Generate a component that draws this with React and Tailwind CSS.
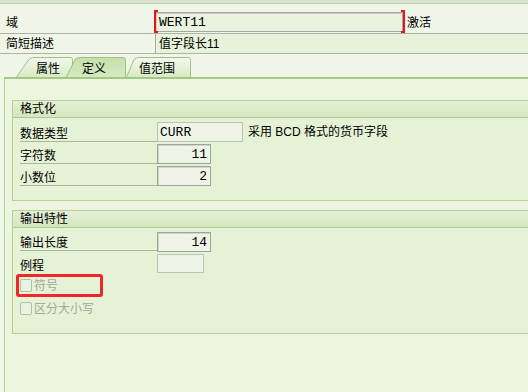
import React from "react";

const CJK = "font-['Liberation_Sans','Noto_Sans_CJK_SC',sans-serif]";
const MONO = "font-['Liberation_Mono','Noto_Sans_CJK_SC',monospace]";

function Tab({ w, s, tp, label, active, className }) {
  const id = active ? "gActive" : "gIdle";
  return (
    <div className={"relative h-[20px] shrink-0 " + className} style={{ width: w }}>
      <svg className="absolute inset-0" width={w} height={20} viewBox={`0 0 ${w} 20`}>
        <defs>
          <linearGradient id="gIdle" x1="0" y1="0" x2="0" y2="1">
            <stop offset="0" stopColor="#f3f8ec" />
            <stop offset="1" stopColor="#d8eac4" />
          </linearGradient>
          <linearGradient id="gActive" x1="0" y1="0" x2="0" y2="1">
            <stop offset="0" stopColor="#c5e0a9" />
            <stop offset="1" stopColor="#d6eac2" />
          </linearGradient>
        </defs>
        <path
          d={`M0.5,20 L${s - 2},2.5 Q${s},0.5 ${s + 3},0.5 L${w - 2.5},0.5 Q${w - 0.5},0.5 ${w - 0.5},2.5 L${w - 0.5},20`}
          fill={`url(#${id})`}
          stroke="#a0c185"
          strokeWidth="1"
        />
      </svg>
      <div
        className={"relative h-full flex items-center pt-[3px] text-[12px] text-black leading-none " + CJK}
        style={{ paddingLeft: tp }}
      >
        {label}
      </div>
    </div>
  );
}

function Input({ w, h = 20, value, right, light }) {
  return (
    <div
      className={
        "shrink-0 flex items-center bg-[#eef5e6] border text-[13px] text-black leading-none " +
        MONO +
        (light
          ? " border-[#bdc1b8]"
          : " border-[#9fa39b] shadow-[inset_1px_1px_0_#d0d4cb]") +
        (right ? " justify-end pr-[3px]" : " pl-[2px]")
      }
      style={{ width: w, height: h }}
    >
      {value}
    </div>
  );
}

function LabelCell({ children, line = true, h = 20 }) {
  return (
    <div
      className={
        "ml-[7px] w-[137px] shrink-0 flex items-end pb-[1px] text-[12px] text-black leading-none " +
        CJK +
        (line ? " border-b border-[#a9b5a0]" : "")
      }
      style={{ height: h }}
    >
      {children}
    </div>
  );
}

function Row({ label, line, children, h = 22, lh = 20 }) {
  return (
    <div className="flex items-start" style={{ height: h }}>
      <LabelCell line={line} h={lh}>{label}</LabelCell>
      {children}
    </div>
  );
}

function Group({ title, children, className }) {
  return (
    <div className={"w-[530px] shrink-0 border border-[#b3d099] bg-[#e5f2d5] " + className}>
      <div
        className={
          "h-[17px] border-b border-[#adc893] bg-gradient-to-b from-[#e4f0d6] to-[#d3e7bf] flex items-center pl-[7px] text-[12px] text-black leading-none " +
          CJK
        }
      >
        {title}
      </div>
      {children}
    </div>
  );
}

function Check({ label }) {
  return (
    <div className={"flex items-center gap-[2px] text-[12px] text-[#a3a79f] leading-none " + CJK}>
      <div className="w-[12px] h-[13px] border border-[#b6bab1] rounded-[2px] bg-[#eaf3e0]" />
      <span>{label}</span>
    </div>
  );
}

export default function App() {
  return (
    <div className={"w-[528px] h-[392px] overflow-hidden bg-[#eff5e7] flex flex-col " + CJK}>
      <div className="h-[3px] bg-[#dbe5cd] shrink-0" />
      <div className="h-px bg-[#c2ccb6] shrink-0" />

      {/* Row 1 */}
      <div className="h-[30px] shrink-0 flex items-start border-b border-[#adb3a7]">
        <div className="w-[154px] pl-[6px] mt-[9px] h-[20px] flex items-center text-[12px] text-black leading-none shrink-0">
          域
        </div>
        <div className="relative w-[251px] h-[23px] mt-[6px] shrink-0">
          <span className="absolute left-0 top-0 w-[2px] h-[23px] bg-[#e8141c]" />
          <span className="absolute left-0 top-0 w-[4px] h-[2px] bg-[#e8141c]" />
          <span className="absolute left-0 bottom-0 w-[4px] h-[2px] bg-[#e8141c]" />
          <span className="absolute right-0 top-0 w-[2px] h-[23px] bg-[#e8141c]" />
          <span className="absolute right-0 top-0 w-[4px] h-[2px] bg-[#e8141c]" />
          <span className="absolute right-0 bottom-0 w-[4px] h-[2px] bg-[#e8141c]" />
          <div
            className={
              "ml-[1px] mt-[2px] w-[248px] h-[20px] bg-[#eaf3e0] border border-[#a4a8a0] shadow-[inset_1px_1px_0_#c9cdc4] flex items-center pl-[3px] text-[13px] text-black leading-none " +
              MONO
            }
          >
            WERT11
          </div>
        </div>
        <div className="pl-[2px] mt-[9px] h-[20px] flex items-center text-[12px] text-black leading-none">激活</div>
      </div>

      {/* Row 2 */}
      <div className="h-[20px] shrink-0 flex border-b border-[#adb3a7]">
        <div className="w-[155px] pl-[6px] flex items-center text-[12px] text-black leading-none shrink-0">简短描述</div>
        <div className="flex-1 bg-[#e8f1da] border-l border-[#a8ada3] flex items-center pl-[3px] text-[12px] text-black leading-none">
          值字段长11
        </div>
      </div>

      {/* Tabs */}
      <div className="h-[20px] mt-[3px] shrink-0 flex items-end">
        <Tab w={57} s={15} tp={20} label="属性" className="ml-[16px]" />
        <Tab w={60} s={11} tp={16} label="定义" active className="-ml-[7px] z-10" />
        <Tab w={65} s={10} tp={13} label="值范围" className="ml-0" />
      </div>

      {/* Panel */}
      <div className="flex-1 ml-[4px] border-t-2 border-l border-t-[#a2c884] border-l-[#b3d39a] bg-[#edf5df] pl-[7px] pt-[21px] flex flex-col">
        <Group title="格式化" className="pb-[12px]">
          <div className="pt-[4px] flex flex-col">
            <Row label="数据类型">
              <Input w={86} value="CURR" light />
              <div className="ml-[5px] h-[20px] flex items-center text-[12px] text-black leading-none">
                采用 BCD 格式的货币字段
              </div>
            </Row>
            <Row label="字符数">
              <Input w={54} value="11" right />
            </Row>
            <Row label="小数位">
              <Input w={54} value="2" right />
            </Row>
          </div>
        </Group>

        <Group title="输出特性" className="mt-[9px] pb-[18px]">
          <div className="pt-[4px] flex flex-col">
            <Row label="输出长度" lh={19}>
              <Input w={54} value="14" right />
            </Row>
            <Row label="例程" line={false} h={20} lh={19}>
              <Input w={47} h={19} value="" light />
            </Row>
            <div className="ml-[3px] w-[87px] h-[23px] border-[3px] border-[#f0262a] rounded-[3px] flex items-center pl-[1px]">
              <Check label="符号" />
            </div>
            <div className="ml-[7px] mt-[5px] h-[13px] flex items-center">
              <Check label="区分大小写" />
            </div>
          </div>
        </Group>
      </div>
    </div>
  );
}
